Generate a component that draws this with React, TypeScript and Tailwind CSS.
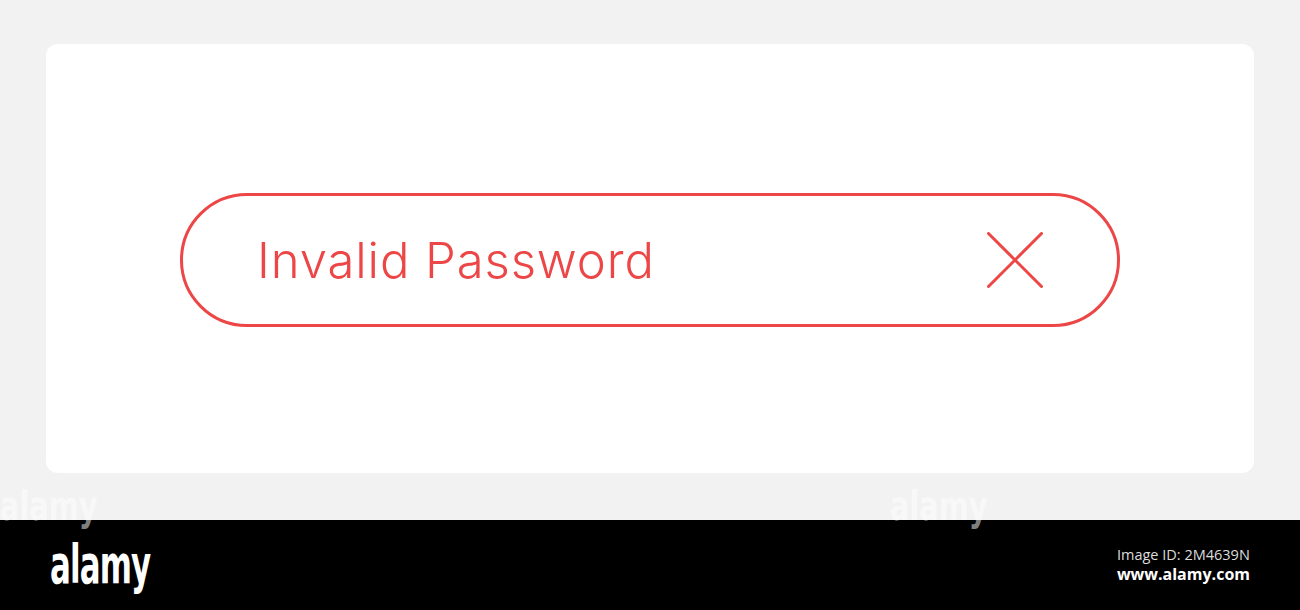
export default function App() {
  return (
    <div className="w-[1300px] h-[610px] flex flex-col overflow-hidden">
      <div className="relative h-[520px] bg-[#f2f2f2] px-[46px] pt-[44px] pb-[47px]">
        {/* faint watermarks */}
        <span className="absolute left-0 top-[486px] text-[40px] font-bold leading-none text-white/50 origin-left scale-x-[0.8] font-['DejaVu_Sans_Condensed',sans-serif]">
          alamy
        </span>
        <span className="absolute left-[890px] top-[486px] text-[40px] font-bold leading-none text-white/50 origin-left scale-x-[0.8] font-['DejaVu_Sans_Condensed',sans-serif]">
          alamy
        </span>

        <div className="relative h-full bg-white rounded-[12px] flex items-center justify-center">
          <div className="mt-[3px] w-[940px] h-[134px] border-[3px] border-[#ec4646] rounded-full flex items-center justify-between px-[74px]">
            <span className="text-[49px] font-light leading-none tracking-[0.9px] text-[#ec4646] font-['Inter',sans-serif]">
              Invalid Password
            </span>
            <svg width="56" height="56" viewBox="0 0 56 56" fill="none">
              <path
                d="M1.5 1.5 L54.5 54.5 M54.5 1.5 L1.5 54.5"
                stroke="#ec4646"
                strokeWidth="3"
                strokeLinecap="round"
              />
            </svg>
          </div>
        </div>
      </div>

      <div className="h-[90px] bg-black flex items-center justify-between pl-[50px] pr-[50px]">
        <span className="text-[44px] font-bold leading-none text-white tracking-tight origin-left scale-x-[0.78] scale-y-[1.2] font-['DejaVu_Sans_Condensed',sans-serif]">
          alamy
        </span>
        <div className="flex flex-col items-start font-['Open_Sans',sans-serif] leading-tight">
          <span className="text-[14.5px] text-[#dddddd]">Image ID: 2M4639N</span>
          <span className="text-[16px] font-bold text-white">www.alamy.com</span>
        </div>
      </div>
    </div>
  );
}
